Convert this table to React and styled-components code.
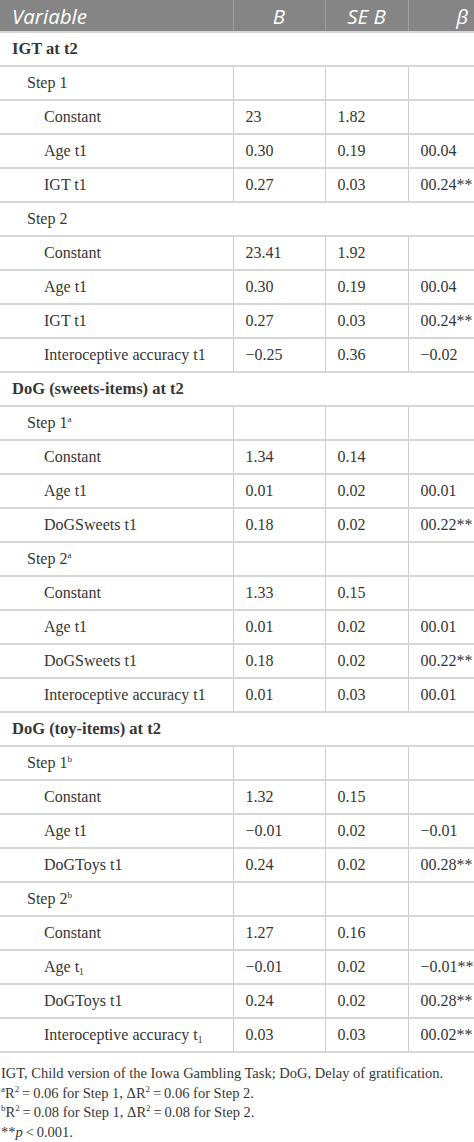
import React from 'react'
import styled, { createGlobalStyle } from 'styled-components'

const GlobalStyle = createGlobalStyle`
    html, body {
        margin: 0;
        padding: 0;
        background: #ffffff;
        overflow: hidden;
    }
`
const Container = styled.div`
    width: 474px;
    overflow: hidden;
    font-family: "Liberation Serif", "Times New Roman", serif;
    color: #363636;
`
const Table = styled.table`
    width: 516px;
    border-collapse: collapse;
    table-layout: fixed;
`
const HeadCell = styled.th`
    height: 31px;
    padding: 0 12px;
    background: #858585;
    color: #ffffff;
    font-family: "Open Sans", "Liberation Sans", sans-serif;
    font-style: italic;
    font-weight: 400;
    font-size: 20.5px;
    text-align: ${p => (p.left ? 'left' : 'center')};
    border-left: ${p => (p.left ? 'none' : '1px solid #a0a0a0')};
    border-bottom: 2px solid #d6d6d6;
`
const Row = styled.tr`
    height: 34px;
    border-bottom: 2px solid #d6d6d6;
`
const Cell = styled.td`
    padding: 0 0 0 ${p => p.indent || 12}px;
    font-size: ${p => (p.bold ? 16.5 : 16)}px;
    font-weight: ${p => (p.bold ? 700 : 400)};
    white-space: nowrap;
    border-left: ${p => (p.first ? 'none' : '1px solid #cccccc')};
    vertical-align: middle;
`
const Sup = styled.sup`
    font-size: 9px;
    vertical-align: 6px;
    line-height: 0;
`
const Sub = styled.sub`
    font-size: 9.5px;
    vertical-align: -3px;
    line-height: 0;
`
const Notes = styled.div`
    padding: 11px 0 0 1px;
    font-size: 14.5px;
    line-height: 19.5px;
`

const section = (title) => ({ type: 'section', title })
const step = (label, mark, open) => ({ type: 'step', label, mark, open })
const item = (label, b, se, beta, sub) => ({ type: 'item', label, b, se, beta, sub })

const rows = [
    section('IGT at t2'),
    step('Step 1'),
    item('Constant', '23', '1.82', ''),
    item('Age t1', '0.30', '0.19', '00.04'),
    item('IGT t1', '0.27', '0.03', '00.24**'),
    step('Step 2', null, true),
    item('Constant', '23.41', '1.92', ''),
    item('Age t1', '0.30', '0.19', '00.04'),
    item('IGT t1', '0.27', '0.03', '00.24**'),
    item('Interoceptive accuracy t1', '\u22120.25', '0.36', '\u22120.02'),
    section('DoG (sweets-items) at t2'),
    step('Step 1', 'a'),
    item('Constant', '1.34', '0.14', ''),
    item('Age t1', '0.01', '0.02', '00.01'),
    item('DoGSweets t1', '0.18', '0.02', '00.22**'),
    step('Step 2', 'a'),
    item('Constant', '1.33', '0.15', ''),
    item('Age t1', '0.01', '0.02', '00.01'),
    item('DoGSweets t1', '0.18', '0.02', '00.22**'),
    item('Interoceptive accuracy t1', '0.01', '0.03', '00.01'),
    section('DoG (toy-items) at t2'),
    step('Step 1', 'b'),
    item('Constant', '1.32', '0.15', ''),
    item('Age t1', '\u22120.01', '0.02', '\u22120.01'),
    item('DoGToys t1', '0.24', '0.02', '00.28**'),
    step('Step 2', 'b'),
    item('Constant', '1.27', '0.16', ''),
    item('Age t', '\u22120.01', '0.02', '\u22120.01**', '1'),
    item('DoGToys t1', '0.24', '0.02', '00.28**'),
    item('Interoceptive accuracy t', '0.03', '0.03', '00.02**', '1'),
]

function TableRow({ row }) {
    if (row.type === 'section') {
        return (
            <Row>
                <Cell first bold colSpan={4}>{row.title}</Cell>
            </Row>
        )
    }
    if (row.type === 'step') {
        const label = (
            <>
                {row.label}
                {row.mark && <Sup>{row.mark}</Sup>}
            </>
        )
        if (row.open) {
            return (
                <Row>
                    <Cell first indent={27} colSpan={4}>{label}</Cell>
                </Row>
            )
        }
        return (
            <Row>
                <Cell first indent={27}>{label}</Cell>
                <Cell />
                <Cell />
                <Cell />
            </Row>
        )
    }
    return (
        <Row>
            <Cell first indent={44}>
                {row.label}
                {row.sub && <Sub>{row.sub}</Sub>}
            </Cell>
            <Cell>{row.b}</Cell>
            <Cell>{row.se}</Cell>
            <Cell>{row.beta}</Cell>
        </Row>
    )
}

export default function App() {
    return (
        <Container>
            <GlobalStyle />
            <Table>
                <colgroup>
                    <col style={{ width: 233 }} />
                    <col style={{ width: 92 }} />
                    <col style={{ width: 83 }} />
                    <col style={{ width: 108 }} />
                </colgroup>
                <thead>
                    <tr>
                        <HeadCell left>Variable</HeadCell>
                        <HeadCell>B</HeadCell>
                        <HeadCell>SE B</HeadCell>
                        <HeadCell>β</HeadCell>
                    </tr>
                </thead>
                <tbody>
                    {rows.map((row, i) => (
                        <TableRow key={i} row={row} />
                    ))}
                </tbody>
            </Table>
            <Notes>
                <div>IGT, Child version of the Iowa Gambling Task; DoG, Delay of gratification.</div>
                <div><Sup>a</Sup>R<Sup>2</Sup>{'\u2009=\u2009'}0.06 for Step 1, ΔR<Sup>2</Sup>{'\u2009=\u2009'}0.06 for Step 2.</div>
                <div><Sup>b</Sup>R<Sup>2</Sup>{'\u2009=\u2009'}0.08 for Step 1, ΔR<Sup>2</Sup>{'\u2009=\u2009'}0.08 for Step 2.</div>
                <div>**<i>p</i>{'\u2009<\u2009'}0.001.</div>
            </Notes>
        </Container>
    )
}
